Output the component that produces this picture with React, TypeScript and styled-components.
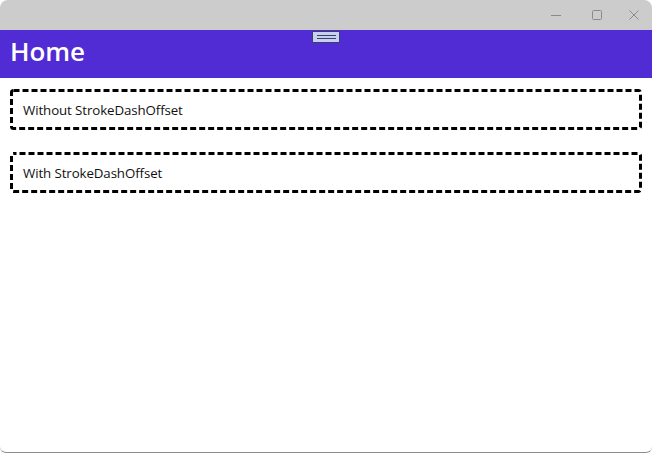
import React from "react";
import styled, { createGlobalStyle } from "styled-components";

const GlobalStyle = createGlobalStyle`
  html, body {
    margin: 0;
    padding: 0;
    background: #ffffff;
  }
  body {
    font-family: "Open Sans", "Noto Sans", sans-serif;
  }
`;

const samples = ["Without StrokeDashOffset", "With StrokeDashOffset"];

const DashedFrame = ({ offset }: { offset: number }) => (
  <FrameSvg preserveAspectRatio="none">
    <rect
      x="1.5"
      y="1.5"
      width="calc(100% - 3px)"
      height="calc(100% - 3px)"
      rx="2"
      fill="none"
      stroke="#000"
      strokeWidth="3"
      strokeDasharray="6 3"
      strokeDashoffset={offset}
    />
  </FrameSvg>
);

const App = () => {
  return (
    <Window>
      <GlobalStyle />
      <TitleBar>
        <Caption>
          <CaptionButton $width={44} aria-label="Minimize">
            <svg width="12" height="12" viewBox="0 0 12 12">
              <path d="M1 6.5h10" stroke="#8a8a8a" strokeWidth="1" />
            </svg>
          </CaptionButton>
          <CaptionButton $width={38} aria-label="Maximize">
            <svg width="12" height="12" viewBox="0 0 12 12">
              <rect x="1.5" y="1.5" width="9" height="9" fill="none" stroke="#8a8a8a" strokeWidth="1" rx="1" />
            </svg>
          </CaptionButton>
          <CaptionButton $width={36} aria-label="Close">
            <svg width="12" height="12" viewBox="0 0 12 12">
              <path d="M1.5 1.5l9 9M10.5 1.5l-9 9" stroke="#8a8a8a" strokeWidth="1" />
            </svg>
          </CaptionButton>
        </Caption>
      </TitleBar>
      <Header>
        <Title>Home</Title>
        <Grip>
          <GripLine />
          <GripLine />
        </Grip>
      </Header>
      <Content>
        {samples.map((label, i) => (
          <DashBox key={label}>
            <DashedFrame offset={i === 0 ? 0 : 3} />
            <Label>{label}</Label>
          </DashBox>
        ))}
      </Content>
    </Window>
  );
};

export default App;

const Window = styled.div`
  width: 652px;
  height: 453px;
  display: flex;
  flex-direction: column;
  background: #ffffff;
  border-radius: 8px 8px 6px 6px;
  border-bottom: 1px solid #8e8e8e;
  box-sizing: border-box;
  overflow: hidden;
`;

const TitleBar = styled.div`
  height: 30px;
  flex-shrink: 0;
  background: #cccccc;
  display: flex;
  justify-content: flex-end;
`;

const Caption = styled.div`
  display: flex;
  align-items: center;
`;

const CaptionButton = styled.div<{ $width: number }>`
  width: ${(p) => p.$width}px;
  height: 27px;
  display: flex;
  align-items: center;
  justify-content: center;
`;

const Header = styled.div`
  position: relative;
  height: 48px;
  flex-shrink: 0;
  background: #512bd4;
  display: flex;
  align-items: center;
  padding-left: 10px;
`;

const Title = styled.h1`
  margin: 0;
  color: #ffffff;
  font-family: "Open Sans", "Noto Sans", sans-serif;
  font-size: 26px;
  font-weight: 600;
  line-height: 1;
  letter-spacing: -0.1px;
  padding-bottom: 6px;
`;

const Grip = styled.div`
  position: absolute;
  top: 1px;
  left: 312px;
  width: 26px;
  height: 10px;
  background: #c8d0f0;
  border: 1px solid #3a3f6e;
  box-sizing: content-box;
  display: flex;
  flex-direction: column;
  justify-content: center;
  align-items: center;
  gap: 2px;
`;

const GripLine = styled.div`
  width: 19px;
  height: 1px;
  background: #3a3f6e;
`;

const Content = styled.div`
  display: flex;
  flex-direction: column;
  gap: 22px;
  padding: 11px 10px 0 10px;
`;

const DashBox = styled.div`
  position: relative;
  height: 41px;
  display: flex;
  align-items: center;
  padding-left: 13px;
`;

const FrameSvg = styled.svg`
  position: absolute;
  inset: 0;
  width: 100%;
  height: 100%;
  overflow: visible;
`;

const Label = styled.span`
  font-family: "Open Sans", "Noto Sans", sans-serif;
  font-size: 13.3px;
  letter-spacing: -0.1px;
  color: #111111;
`;
